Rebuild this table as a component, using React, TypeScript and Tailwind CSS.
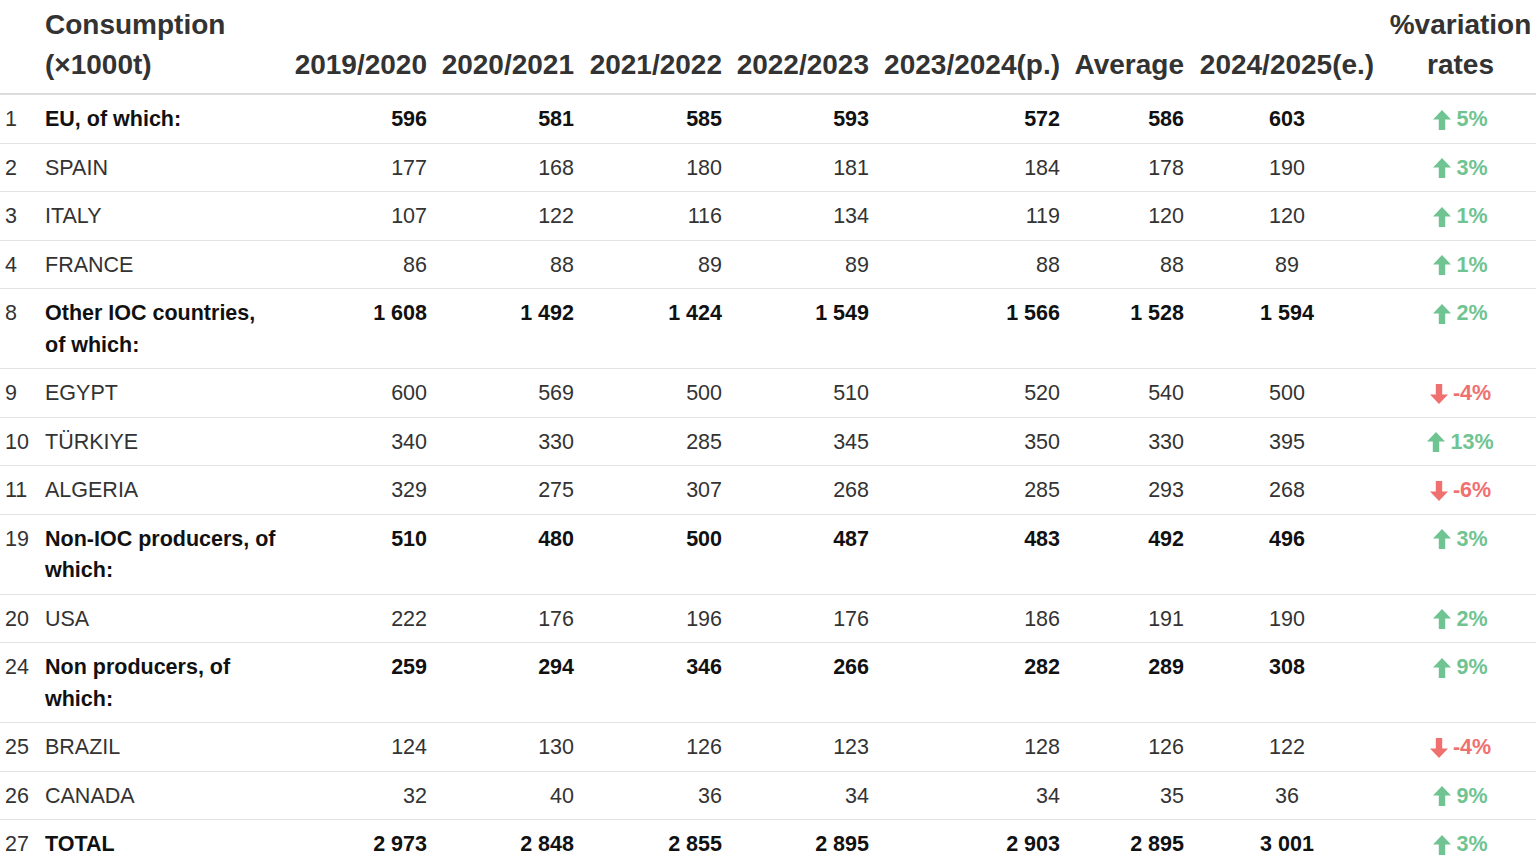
import clsx from "clsx"

type Row = {
	idx: string
	name: string
	bold?: boolean
	values: string[]
	change: number
}

const rows: Row[] = [
	{ idx: "1", name: "EU, of which:", bold: true, values: ["596", "581", "585", "593", "572", "586", "603"], change: 5 },
	{ idx: "2", name: "SPAIN", values: ["177", "168", "180", "181", "184", "178", "190"], change: 3 },
	{ idx: "3", name: "ITALY", values: ["107", "122", "116", "134", "119", "120", "120"], change: 1 },
	{ idx: "4", name: "FRANCE", values: ["86", "88", "89", "89", "88", "88", "89"], change: 1 },
	{
		idx: "8",
		name: "Other IOC countries, of which:",
		bold: true,
		values: ["1 608", "1 492", "1 424", "1 549", "1 566", "1 528", "1 594"],
		change: 2,
	},
	{ idx: "9", name: "EGYPT", values: ["600", "569", "500", "510", "520", "540", "500"], change: -4 },
	{ idx: "10", name: "TÜRKIYE", values: ["340", "330", "285", "345", "350", "330", "395"], change: 13 },
	{ idx: "11", name: "ALGERIA", values: ["329", "275", "307", "268", "285", "293", "268"], change: -6 },
	{
		idx: "19",
		name: "Non-IOC producers, of which:",
		bold: true,
		values: ["510", "480", "500", "487", "483", "492", "496"],
		change: 3,
	},
	{ idx: "20", name: "USA", values: ["222", "176", "196", "176", "186", "191", "190"], change: 2 },
	{
		idx: "24",
		name: "Non producers, of which:",
		bold: true,
		values: ["259", "294", "346", "266", "282", "289", "308"],
		change: 9,
	},
	{ idx: "25", name: "BRAZIL", values: ["124", "130", "126", "123", "128", "126", "122"], change: -4 },
	{ idx: "26", name: "CANADA", values: ["32", "40", "36", "34", "34", "35", "36"], change: 9 },
	{
		idx: "27",
		name: "TOTAL",
		bold: true,
		values: ["2 973", "2 848", "2 855", "2 895", "2 903", "2 895", "3 001"],
		change: 3,
	},
]

const years = ["2019/2020", "2020/2021", "2021/2022", "2022/2023", "2023/2024(p.)", "Average"]

// solid block arrow, flipped for negative values
const Arrow = ({ up }: { up: boolean }) => (
	<svg
		viewBox="0 0 18 20"
		className={clsx("block h-[20px] w-[18px] shrink-0", !up && "rotate-180")}
	>
		<path d="M9 0 L18 9.5 L12.2 9.5 L12.2 20 L5.8 20 L5.8 9.5 L0 9.5 Z" fill="currentColor" />
	</svg>
)

const Change = ({ value }: { value: number }) => {
	const up = value >= 0
	return (
		<div
			className={clsx(
				"flex items-center justify-center gap-[5px] font-bold",
				up ? "text-[#6fc491]" : "text-[#f07070]",
			)}
		>
			<Arrow up={up} />
			<span>{value}%</span>
		</div>
	)
}

export default function App() {
	return (
		<div className="min-h-screen bg-white font-['Liberation_Sans',Arial,Helvetica,sans-serif]">
			<table className="w-[1536px] table-fixed border-collapse">
				<colgroup>
					<col className="w-[40px]" />
					<col className="w-[246px]" />
					<col className="w-[146px]" />
					<col className="w-[147px]" />
					<col className="w-[148px]" />
					<col className="w-[147px]" />
					<col className="w-[191px]" />
					<col className="w-[124px]" />
					<col className="w-[196px]" />
					<col className="w-[151px]" />
				</colgroup>
				<thead>
					<tr className="border-b-2 border-[#dcdcdc] text-[28px] leading-[40px] font-bold text-[#333]">
						<th className="px-[5px] pt-[5px] pb-[8px]" />
						<th className="px-[5px] pt-[5px] pb-[8px] text-left align-bottom">
							Consumption
							<br />
							(×1000t)
						</th>
						{years.map((y) => (
							<th
								key={y}
								className="whitespace-nowrap px-[5px] pt-[5px] pb-[8px] text-right align-bottom"
							>
								{y}
							</th>
						))}
						<th className="whitespace-nowrap px-[5px] pt-[5px] pb-[8px] text-center align-bottom">
							2024/2025(e.)
						</th>
						<th className="whitespace-nowrap pt-[5px] pb-[8px] text-center align-bottom">
							%variation
							<br />
							rates
						</th>
					</tr>
				</thead>
				<tbody>
					{rows.map((row) => (
						<tr
							key={row.idx}
							className={clsx(
								"border-b border-[#e3e3e3] text-[21.5px] leading-[31.5px]",
								row.bold ? "font-bold text-[#111]" : "text-[#333]",
							)}
						>
							<td className="pt-[9px] pb-[7px] pl-[5px] align-top font-normal text-[#333]">{row.idx}</td>
							<td className="px-[5px] pt-[9px] pb-[7px] align-top">{row.name}</td>
							{row.values.slice(0, 6).map((v, i) => (
								<td key={i} className="whitespace-nowrap px-[5px] pt-[9px] pb-[7px] text-right align-top">
									{v}
								</td>
							))}
							<td className="whitespace-nowrap px-[5px] pt-[9px] pb-[7px] text-center align-top">
								{row.values[6]}
							</td>
							<td className="pt-[9px] pb-[7px] align-top">
								<Change value={row.change} />
							</td>
						</tr>
					))}
				</tbody>
			</table>
		</div>
	)
}
